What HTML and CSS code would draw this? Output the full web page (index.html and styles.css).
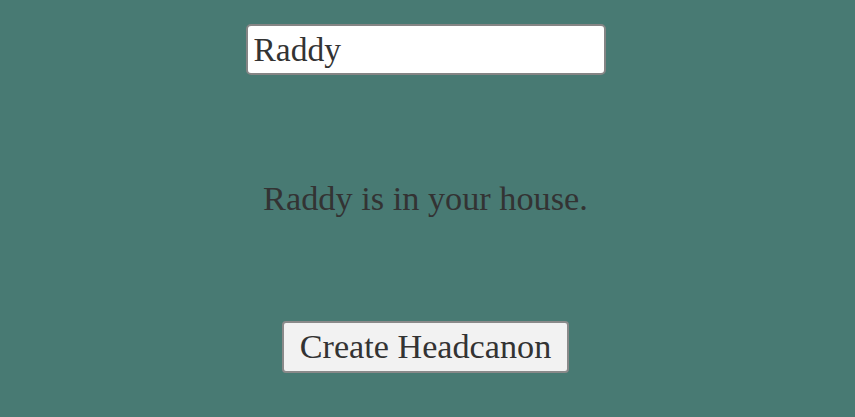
FILE: index.html
```html
<!DOCTYPE html>
<html>
<head>
<meta charset="utf-8">
<link rel="stylesheet" href="styles.css">
</head>
<body>
<main class="app">
  <input class="name-input" type="text" value="Raddy">
  <p class="headcanon">Raddy is in your house.</p>
  <button class="create-btn">Create Headcanon</button>
</main>
</body>
</html>
```
FILE: styles.css
```css
html, body {
  margin: 0;
  padding: 0;
  background: #487a73;
  height: 100%;
}
.app {
  display: flex;
  flex-direction: column;
  align-items: center;
  padding-top: 24px;
  font-family: "Liberation Serif", "Times New Roman", serif;
  color: #333;
}
.name-input {
  box-sizing: border-box;
  width: 360px;
  height: 51px;
  margin-left: -4px;
  padding: 0 6px;
  font-family: "Liberation Serif", serif;
  font-size: 33.5px;
  color: #333;
  background: #fff;
  border: 2px solid #858585;
  border-radius: 5px;
  outline: none;
}
.headcanon {
  margin: 99px 0 0;
  font-size: 34.3px;
  line-height: 48px;
  margin-left: -4px;
}
.create-btn {
  box-sizing: border-box;
  margin-top: 99px;
  margin-left: -4px;
  height: 52px;
  padding: 0 16px;
  font-family: "Liberation Serif", serif;
  font-size: 34.2px;
  color: #333;
  background: #f2f2f2;
  border: 2px solid #8a8a8a;
  border-radius: 4px;
}
```
